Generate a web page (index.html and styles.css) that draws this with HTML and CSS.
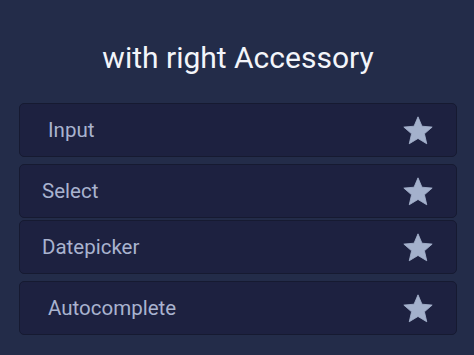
FILE: index.html
```html
<!DOCTYPE html>
<html>
<head>
<meta charset="utf-8">
<link rel="stylesheet" href="styles.css">
</head>
<body>
<div class="page">
  <h1 class="title">with right Accessory</h1>
  <div class="list">
    <div class="field field-inset">
      <span class="label">Input</span>
      <svg class="star" viewBox="0 0 24 24"><path d="M12 17.27L18.18 21l-1.64-7.03L22 9.24l-7.19-.61L12 2 9.19 8.63 2 9.24l5.46 4.73L5.82 21z"/></svg>
    </div>
    <div class="field">
      <span class="label">Select</span>
      <svg class="star" viewBox="0 0 24 24"><path d="M12 17.27L18.18 21l-1.64-7.03L22 9.24l-7.19-.61L12 2 9.19 8.63 2 9.24l5.46 4.73L5.82 21z"/></svg>
    </div>
    <div class="field field-tight">
      <span class="label">Datepicker</span>
      <svg class="star" viewBox="0 0 24 24"><path d="M12 17.27L18.18 21l-1.64-7.03L22 9.24l-7.19-.61L12 2 9.19 8.63 2 9.24l5.46 4.73L5.82 21z"/></svg>
    </div>
    <div class="field field-inset">
      <span class="label">Autocomplete</span>
      <svg class="star" viewBox="0 0 24 24"><path d="M12 17.27L18.18 21l-1.64-7.03L22 9.24l-7.19-.61L12 2 9.19 8.63 2 9.24l5.46 4.73L5.82 21z"/></svg>
    </div>
  </div>
</div>
</body>
</html>
```
FILE: styles.css
```css
html, body {
  margin: 0;
  padding: 0;
  background: #232c49;
  height: 100%;
}
.page {
  box-sizing: border-box;
  width: 474px;
  height: 355px;
  padding: 0 17px 0 19px;
  font-family: Roboto, "Noto Sans", sans-serif;
}
.title {
  margin: 0;
  height: 103px;
  box-sizing: border-box;
  padding-top: 40px;
  text-align: center;
  font-size: 30px;
  font-weight: 400;
  line-height: 36px;
  color: #f3f5fa;
}
.list {
  display: flex;
  flex-direction: column;
  gap: 7px;
}
.field {
  box-sizing: border-box;
  height: 54px;
  display: flex;
  align-items: center;
  justify-content: space-between;
  padding: 0 21px 0 22px;
  background: #1d2140;
  border: 1px solid #161a31;
  border-radius: 5px;
}
.field-inset {
  padding-left: 28px;
}
.field-tight {
  margin-top: -5px;
}
.label {
  font-size: 20.5px;
  color: #a9b3cf;
  line-height: 24px;
}
.star {
  width: 34px;
  height: 34px;
  margin-top: 1px;
  fill: #a4b1cc;
  stroke: #a4b1cc;
  stroke-width: 0.6;
  stroke-linejoin: round;
}
```
